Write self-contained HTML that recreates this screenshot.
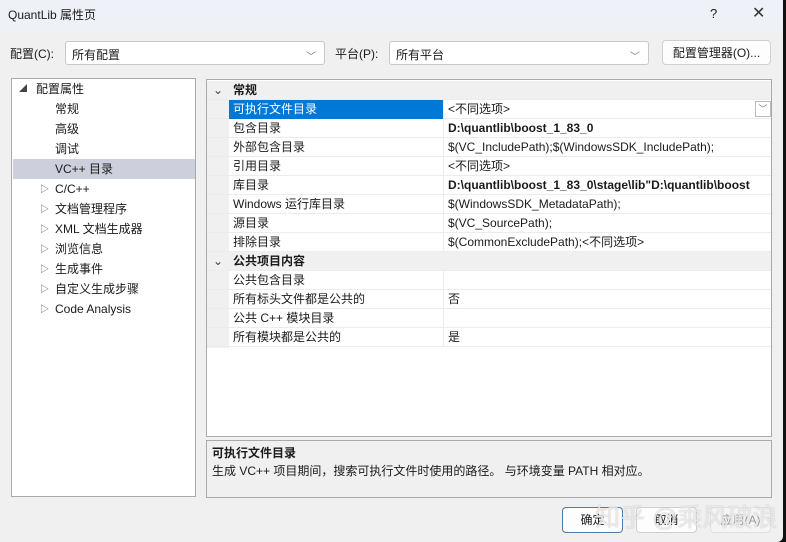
<!DOCTYPE html>
<html><head><meta charset="utf-8"><style>
*{box-sizing:border-box;margin:0;padding:0}
body{width:786px;height:542px;overflow:hidden;background:#111;font-family:"Liberation Sans","Noto Sans CJK SC",sans-serif;font-size:12px;color:#1a1a1a;position:relative}
.win{position:absolute;left:0;top:0;width:783px;height:542px;background:#f0f0f0;border-bottom-right-radius:6px}
.title{position:absolute;left:0;top:0;width:783px;height:30px;background:#eef2f8}
.abs{position:absolute;white-space:nowrap}
.combo{position:absolute;background:#fff;border:1px solid #c8c8c8;border-radius:3px;height:24px;padding:4px 6px}
.btn{position:absolute;background:#fdfdfd;border:1px solid #d0d0d0;border-radius:4px;text-align:center;line-height:24px}
.chev{position:absolute;right:8px;top:6px;color:#777;font-size:10px}
.tree{position:absolute;left:11px;top:78px;width:185px;height:419px;background:#fff;border:1px solid #aaa}
.ti{position:absolute;height:20px;line-height:20px;white-space:nowrap}
.grid{position:absolute;left:206px;top:79px;width:566px;height:358px;background:#fff;border:1px solid #aaa}
.gut{position:absolute;left:0;top:1px;width:22px;height:267px;background:#f0f0f0}
.row{position:absolute;left:0;width:564px;height:19px;border-bottom:1px solid #ececec;line-height:18px}
.row .n{position:absolute;left:22px;top:0;width:214px;height:19px;padding-left:4px}
.row .v{position:absolute;left:236px;top:0;padding-left:4px;border-left:1px solid #ececec;height:19px;width:330px;overflow:hidden;white-space:nowrap}
.cat{background:#f0f0f0;font-weight:bold}
b{font-weight:bold}
.desc{position:absolute;left:206px;top:440px;width:566px;height:58px;background:#f0f0f0;border:1px solid #aaa;padding:3px 5px;line-height:18px}
</style></head><body>
<div class="win">
<div class="title"></div>
<div class="abs" style="left:8px;top:6px">QuantLib 属性页</div>
<div class="abs" style="left:710px;top:6px;font-size:13px">?</div>
<div class="abs" style="left:752px;top:3px;font-size:16px;color:#333">✕</div>

<div class="abs" style="left:10px;top:45px">配置(C):</div>
<div class="combo" style="left:65px;top:41px;width:260px">所有配置<span class="chev">﹀</span></div>
<div class="abs" style="left:335px;top:45px">平台(P):</div>
<div class="combo" style="left:389px;top:41px;width:260px">所有平台<span class="chev">﹀</span></div>
<div class="btn" style="left:662px;top:40px;width:109px;height:25px">配置管理器(O)...</div>

<div class="tree">
<div class="ti" style="left:7px;top:0;font-size:8px;color:#444">◢</div>
<div class="ti" style="left:24px;top:0">配置属性</div>
<div class="ti" style="left:43px;top:20px">常规</div>
<div class="ti" style="left:43px;top:40px">高级</div>
<div class="ti" style="left:43px;top:60px">调试</div>
<div class="ti" style="left:1px;top:80px;width:182px;background:#cdd0dc"></div>
<div class="ti" style="left:43px;top:80px">VC++ 目录</div>
<div class="ti" style="left:28px;top:100px;font-size:9px;color:#555">▷</div><div class="ti" style="left:43px;top:100px">C/C++</div>
<div class="ti" style="left:28px;top:120px;font-size:9px;color:#555">▷</div><div class="ti" style="left:43px;top:120px">文档管理程序</div>
<div class="ti" style="left:28px;top:140px;font-size:9px;color:#555">▷</div><div class="ti" style="left:43px;top:140px">XML 文档生成器</div>
<div class="ti" style="left:28px;top:160px;font-size:9px;color:#555">▷</div><div class="ti" style="left:43px;top:160px">浏览信息</div>
<div class="ti" style="left:28px;top:180px;font-size:9px;color:#555">▷</div><div class="ti" style="left:43px;top:180px">生成事件</div>
<div class="ti" style="left:28px;top:200px;font-size:9px;color:#555">▷</div><div class="ti" style="left:43px;top:200px">自定义生成步骤</div>
<div class="ti" style="left:28px;top:220px;font-size:9px;color:#555">▷</div><div class="ti" style="left:43px;top:220px">Code Analysis</div>
</div>

<div class="grid">
<div class="gut"></div>
<div class="row cat" style="top:1px"><span class="abs" style="left:6px;top:0;font-weight:normal;color:#444">⌄</span><span class="n">常规</span></div>
<div class="row" style="top:20px"><span class="n" style="background:#0078d7;color:#fff">可执行文件目录</span><span class="v">&lt;不同选项&gt;<span class="abs" style="right:2px;top:1px;width:16px;height:16px;border:1px solid #bbb;font-size:9px;color:#777;text-align:center;line-height:14px;background:#fff">﹀</span></span></div>
<div class="row" style="top:39px"><span class="n">包含目录</span><span class="v"><b>D:\quantlib\boost_1_83_0</b></span></div>
<div class="row" style="top:58px"><span class="n">外部包含目录</span><span class="v">$(VC_IncludePath);$(WindowsSDK_IncludePath);</span></div>
<div class="row" style="top:77px"><span class="n">引用目录</span><span class="v">&lt;不同选项&gt;</span></div>
<div class="row" style="top:96px"><span class="n">库目录</span><span class="v"><b>D:\quantlib\boost_1_83_0\stage\lib"D:\quantlib\boost</b></span></div>
<div class="row" style="top:115px"><span class="n">Windows 运行库目录</span><span class="v">$(WindowsSDK_MetadataPath);</span></div>
<div class="row" style="top:134px"><span class="n">源目录</span><span class="v">$(VC_SourcePath);</span></div>
<div class="row" style="top:153px"><span class="n">排除目录</span><span class="v">$(CommonExcludePath);&lt;不同选项&gt;</span></div>
<div class="row cat" style="top:172px"><span class="abs" style="left:6px;top:0;font-weight:normal;color:#444">⌄</span><span class="n">公共项目内容</span></div>
<div class="row" style="top:191px"><span class="n">公共包含目录</span><span class="v"></span></div>
<div class="row" style="top:210px"><span class="n">所有标头文件都是公共的</span><span class="v">否</span></div>
<div class="row" style="top:229px"><span class="n">公共 C++ 模块目录</span><span class="v"></span></div>
<div class="row" style="top:248px"><span class="n">所有模块都是公共的</span><span class="v">是</span></div>
</div>

<div class="desc"><b>可执行文件目录</b><br>生成 VC++ 项目期间，搜索可执行文件时使用的路径。 与环境变量 PATH 相对应。</div>

<div class="btn" style="left:562px;top:507px;width:61px;height:26px;border:1px solid #4a7ea8">确定</div>
<div class="btn" style="left:636px;top:507px;width:61px;height:26px">取消</div>
<div class="btn" style="left:710px;top:507px;width:61px;height:26px;color:#999;background:#f5f5f5;border-color:#e0e0e0">应用(A)</div>
<div class="abs" style="left:595px;top:498px;font-size:25px;color:rgba(255,255,255,0.7);text-shadow:0 0 1px rgba(120,120,120,0.6)">知乎 @乘风破浪</div>
</div>
</body></html>
